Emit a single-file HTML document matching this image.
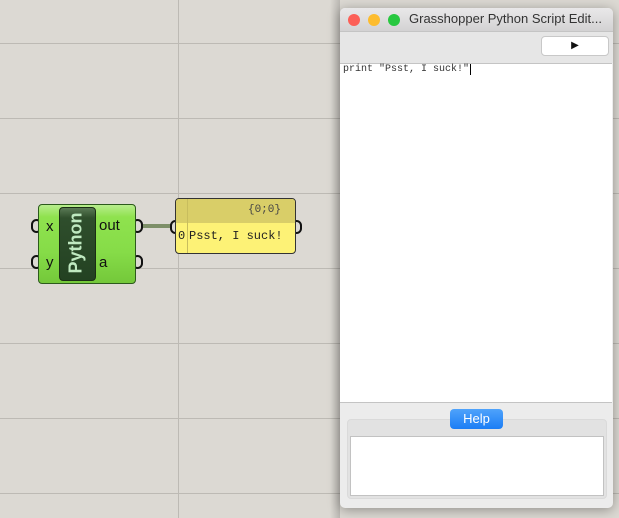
<!DOCTYPE html>
<html><head><style>
body{margin:0;width:619px;height:518px;overflow:hidden;background:#dcd9d3;position:relative;font-family:"Liberation Sans",sans-serif}
.h{position:absolute;left:0;width:619px;height:1px;background:#bdbab4}
.v{position:absolute;top:0;height:518px;width:1px;background:#bdbab4;left:178px}
.a{position:absolute}
.port{position:absolute;width:7px;height:10px;border:2.5px solid #111;border-radius:6px;background:#dcd9d3}
</style></head><body>
<div class="h" style="top:43px"></div><div class="h" style="top:118px"></div><div class="h" style="top:193px"></div><div class="h" style="top:268px"></div><div class="h" style="top:343px"></div><div class="h" style="top:418px"></div><div class="h" style="top:493px"></div>
<div class="v"></div>
<!-- wire -->
<div class="a" style="left:140px;top:224px;width:36px;height:4px;background:#7d8f68"></div>
<!-- python component -->
<div class="port" style="left:31px;top:219px"></div>
<div class="port" style="left:31px;top:255px"></div>
<div class="port" style="left:132px;top:219px"></div>
<div class="port" style="left:132px;top:255px"></div>
<div class="a" style="left:38px;top:204px;width:96px;height:78px;border:1px solid #2c5a1c;border-radius:4px;background:linear-gradient(#b8ee8e 0px,#8fe24e 12px,#86dc48 60%,#74c83a)"></div>
<div class="a" style="left:46px;top:218px;font-size:15px;color:#111">x</div>
<div class="a" style="left:46px;top:254px;font-size:15px;color:#111">y</div>
<div class="a" style="left:99px;top:217px;font-size:15px;color:#111">out</div>
<div class="a" style="left:99px;top:254px;font-size:15px;color:#111">a</div>
<div class="a" style="left:59px;top:207px;width:35px;height:72px;border:1px solid #1a2e14;border-radius:4px;background:linear-gradient(#5a7a55,#2f4e2c 10px,#234222)"></div>
<div class="a" style="left:76px;top:243px;width:0;height:0"><div style="position:absolute;transform:translate(-50%,-50%) rotate(-90deg);font-size:18px;font-weight:bold;color:#bfe9c0;white-space:nowrap">Python</div></div>
<!-- panel -->
<div class="port" style="left:170px;top:220px"></div>
<div class="port" style="left:291px;top:220px"></div>
<div class="a" style="left:175px;top:198px;width:119px;height:54px;border:1px solid #333;border-radius:4px;background:#fdf276;overflow:hidden">
<div style="height:24px;background:#d9ce68"></div>
<div style="position:absolute;left:11px;top:0;width:1px;height:54px;background:#c8bd5e"></div>
<div style="position:absolute;right:14px;top:5px;font:11px 'Liberation Mono',monospace;color:#444">{0;0}</div>
<div style="position:absolute;left:2px;top:30px;font:12px 'Liberation Mono',monospace;color:#222">0</div>
<div style="position:absolute;left:13px;top:30px;font:12px 'Liberation Mono',monospace;color:#222">Psst, I suck!</div>
</div>
<!-- window -->
<div class="a" style="left:330px;top:0;width:10px;height:518px;background:linear-gradient(90deg,rgba(0,0,0,0),rgba(0,0,0,0.15))"></div>
<div class="a" style="left:340px;top:8px;width:273px;height:500px;border-radius:5px;background:#ececec;box-shadow:0 2px 12px rgba(0,0,0,0.35);overflow:hidden">
<div style="height:23px;background:linear-gradient(#e9e8e9,#d3d2d3);border-bottom:1px solid #c4c4c4"></div>
<div style="position:absolute;left:8px;top:6px;width:12px;height:12px;border-radius:50%;background:#fc5f57"></div>
<div style="position:absolute;left:28px;top:6px;width:12px;height:12px;border-radius:50%;background:#fdbc2e"></div>
<div style="position:absolute;left:48px;top:6px;width:12px;height:12px;border-radius:50%;background:#28c840"></div>
<div style="position:absolute;left:69px;top:3px;font-size:13px;color:#333;white-space:nowrap">Grasshopper Python Script Edit...</div>
<div style="position:absolute;left:0;top:24px;width:273px;height:31px;background:#e6e6e6"></div>
<div style="position:absolute;left:201px;top:28px;width:66px;height:18px;background:#fff;border:1px solid #c8c8c8;border-radius:4px;font-size:10px;text-align:center;line-height:18px;color:#111">▶</div>
<div style="position:absolute;left:0;top:55px;width:272px;height:338px;background:#fff;border-bottom:1px solid #c4c4c4;border-top:1px solid #c4c4c4"></div>
<div style="position:absolute;left:3px;top:56px;font:10px 'Liberation Mono',monospace;color:#333;white-space:pre">print "Psst, I suck!"<span style="border-left:1px solid #000;margin-left:1px"></span></div>
<div style="position:absolute;left:7px;top:411px;width:258px;height:78px;background:#e2e2e2;border:1px solid #dadada;border-radius:4px"></div>
<div style="position:absolute;left:10px;top:428px;width:252px;height:58px;background:#fff;border:1px solid #c2c2c2"></div>
<div style="position:absolute;left:110px;top:401px;width:53px;height:20px;border-radius:4px;background:linear-gradient(#4fa3fb,#1b7df5);color:#fff;font-size:13px;text-align:center;line-height:20px">Help</div>
</div>
</body></html>
